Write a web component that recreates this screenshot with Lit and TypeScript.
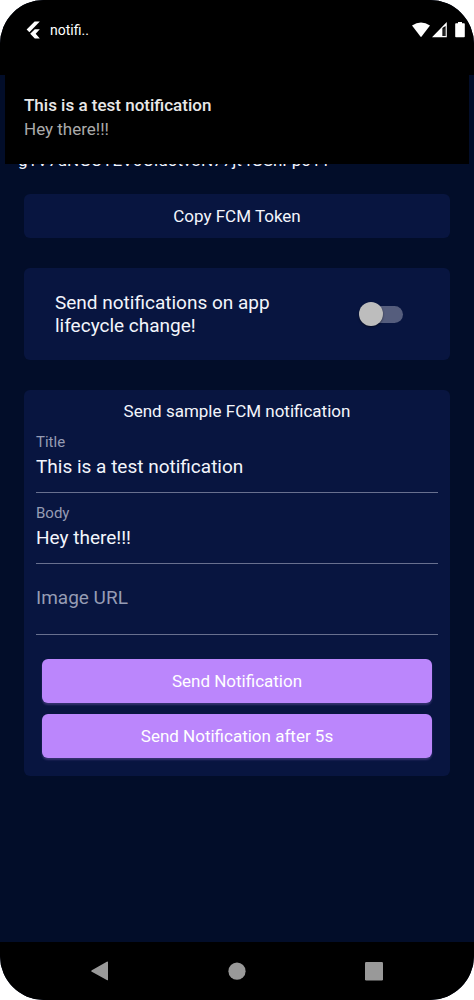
import { LitElement, html, css, svg } from "lit";
import { customElement, state } from "lit/decorators.js";

@customElement("status-bar")
class StatusBar extends LitElement {
  static styles = css`
    :host {
      display: flex;
      align-items: center;
      justify-content: space-between;
      height: 60px;
      padding: 0 9px 0 26px;
      color: #fff;
      font-size: 14px;
      line-height: 20px;
    }
    .app,
    .signals {
      display: flex;
      align-items: center;
    }
    .app {
      gap: 10px;
    }
    .signals {
      gap: 2px;
    }
    .battery {
      margin-left: 6px;
    }
    svg {
      display: block;
      fill: currentColor;
    }
  `;

  render() {
    return html`
      <div class="app">
        <svg width="14" height="18" viewBox="0 0 14 18" aria-hidden="true">
          <path d="M8.6 0.6H13.8L3.4 11.2L0.6 8.5Z" />
          <path d="M8.8 8.3H13.8L9.7 12.7L13.8 17.6H8.8L4.2 12.8Z" />
        </svg>
        <span>notifi..</span>
      </div>
      <div class="signals">
        <svg width="18" height="16" viewBox="0 0 18 16" aria-hidden="true">
          <path d="M0 3.5Q9-2.6 18 3.5L9 15.2Z" />
        </svg>
        <svg width="15" height="16" viewBox="0 0 15 16" aria-hidden="true">
          <path fill-rule="evenodd" d="M14.8 0V15.2H0ZM10.4 6V14H13.6V4Z" />
          <path d="M11.6 6.5H12.6V14H11.6Z" opacity="0.25" />
        </svg>
        <svg class="battery" width="10" height="16" viewBox="0 0 10 16" aria-hidden="true">
          <path d="M3 0H7V1.2H9Q9.8 1.2 9.8 2V14.4Q9.8 15.2 9 15.2H1Q0.2 15.2 0.2 14.4V2Q0.2 1.2 1 1.2H3Z" />
        </svg>
      </div>
    `;
  }
}

@customElement("nav-bar")
class NavBar extends LitElement {
  static styles = css`
    :host {
      display: grid;
      grid-template-columns: repeat(3, 1fr);
      padding: 0 32px;
      height: 58px;
      background: #000;
    }
    button {
      display: flex;
      align-items: center;
      justify-content: center;
      border: 0;
      padding: 0;
      background: none;
      color: #999;
    }
    svg {
      fill: currentColor;
    }
  `;

  render() {
    const icons: [string, unknown][] = [
      ["Back", svg`<path d="M17 1.4V18.4Q17 19.8 15.8 19L0.8 10.8Q-0.4 10 0.8 9.2L15.8 0.7Q17 0 17 1.4Z" />`],
      ["Home", svg`<circle cx="9" cy="10.2" r="8.6" />`],
      ["Recents", svg`<rect x="0" y="1" width="18" height="18.4" rx="1.2" />`],
    ];
    return icons.map(
      ([name, shape]) => html`
        <button aria-label=${name}>
          <svg width="18" height="20" viewBox="0 0 18 20" aria-hidden="true">${shape}</svg>
        </button>
      `
    );
  }
}

@customElement("app-root")
class AppRoot extends LitElement {
  @state() private title_ = "This is a test notification";
  @state() private body_ = "Hey there!!!";
  @state() private image_ = "";

  static styles = css`
    :host {
      display: block;
      background: #fff;
      font-family: Roboto, "Noto Sans", sans-serif;
      color: #f3f5fc;
    }
    .phone {
      position: relative;
      display: flex;
      flex-direction: column;
      min-height: 100vh;
      border-radius: 44px;
      overflow: hidden;
      background: #020d29;
    }
    header {
      height: 75px;
      background: #000;
    }
    .banner {
      position: absolute;
      top: 60px;
      left: 5px;
      right: 5px;
      box-sizing: border-box;
      height: 104px;
      padding: 33px 19px 0;
      background: #000;
      font-size: 17px;
      line-height: 24px;
    }
    .banner p,
    .banner h2 {
      margin: 0;
      font-size: inherit;
    }
    .banner h2 {
      font-weight: 500;
      color: #e8e8e8;
    }
    .banner p {
      color: #ababab;
    }
    main {
      flex: 1;
      display: flex;
      flex-direction: column;
      gap: 30px;
      padding: 75px 24px 0;
    }
    .token {
      margin: 0 -6px -6px;
      font-size: 17px;
      line-height: 20px;
      white-space: nowrap;
    }
    .card {
      border-radius: 6px;
      background: #081540;
    }
    button {
      border: 0;
      font: inherit;
      font-size: 17px;
      line-height: 20px;
      color: inherit;
    }
    .copy {
      height: 44px;
    }
    .toggle {
      display: flex;
      align-items: center;
      justify-content: space-between;
      gap: 24px;
      height: 92px;
      padding: 0 47px 0 31px;
      font-size: 19px;
      line-height: 23px;
    }
    .toggle label {
      max-width: 240px;
    }
    .switch {
      appearance: none;
      flex: none;
      display: grid;
      align-items: center;
      width: 44px;
      height: 24px;
      margin: 0;
    }
    .switch::before,
    .switch::after {
      content: "";
      grid-area: 1 / 1;
    }
    .switch::before {
      height: 17px;
      margin-left: 4px;
      border-radius: 9px;
      background: #555d7d;
    }
    .switch::after {
      width: 24px;
      height: 24px;
      border-radius: 50%;
      background: #bdbdbd;
      box-shadow: 0 1px 2px rgb(0 0 0 / 50%);
    }
    .switch:checked::after {
      justify-self: end;
    }
    form {
      display: flex;
      flex-direction: column;
      padding: 11px 12px 18px;
    }
    form h2 {
      margin: 0 0 11px;
      font-size: 17px;
      font-weight: 400;
      line-height: 20px;
      text-align: center;
    }
    .field {
      display: flex;
      flex-direction: column;
      box-sizing: border-box;
      height: 61px;
      margin-bottom: 10px;
      border-bottom: 1px solid #68708f;
    }
    .field label {
      font-size: 15px;
      line-height: 20px;
      color: #969cb4;
    }
    .field input {
      height: 28px;
      padding: 0;
      border: 0;
      outline: 0;
      background: none;
      font: inherit;
      font-size: 19px;
      color: inherit;
    }
    .field.empty {
      display: grid;
      align-items: center;
      padding-bottom: 12px;
      margin-bottom: 24px;
    }
    .field.empty label,
    .field.empty input {
      grid-area: 1 / 1;
    }
    .field.empty label {
      font-size: 19px;
    }
    .actions {
      display: grid;
      gap: 11px;
      padding: 0 6px;
    }
    .send {
      height: 44px;
      border-radius: 6px;
      background: #bb86fc;
      color: #fff;
      box-shadow: 0 2px 2px rgb(187 134 252 / 25%);
    }
  `;

  private field(id: string, label: string, value: string, set: (v: string) => void) {
    return html`
      <div class="field ${value ? "" : "empty"}">
        <label for=${id}>${label}</label>
        <input
          id=${id}
          type="text"
          .value=${value}
          @input=${(e: Event) => set((e.target as HTMLInputElement).value)}
        />
      </div>
    `;
  }

  render() {
    return html`
      <div class="phone">
        <header><status-bar></status-bar></header>
        <section class="banner" role="status">
          <h2>${this.title_}</h2>
          <p>${this.body_}</p>
        </section>
        <main>
          <p class="token">g1V7dNGOTEV0Oldotv8N77jt4GShFpo11</p>
          <button class="card copy">Copy FCM Token</button>
          <div class="card toggle">
            <label for="lifecycle">Send notifications on app lifecycle change!</label>
            <input class="switch" id="lifecycle" type="checkbox" role="switch" />
          </div>
          <form class="card" @submit=${(e: Event) => e.preventDefault()}>
            <h2>Send sample FCM notification</h2>
            ${this.field("title", "Title", this.title_, (v) => (this.title_ = v))}
            ${this.field("body", "Body", this.body_, (v) => (this.body_ = v))}
            ${this.field("image", "Image URL", this.image_, (v) => (this.image_ = v))}
            <div class="actions">
              <button class="send" type="submit">Send Notification</button>
              <button class="send" type="button">Send Notification after 5s</button>
            </div>
          </form>
        </main>
        <nav-bar></nav-bar>
      </div>
    `;
  }
}
